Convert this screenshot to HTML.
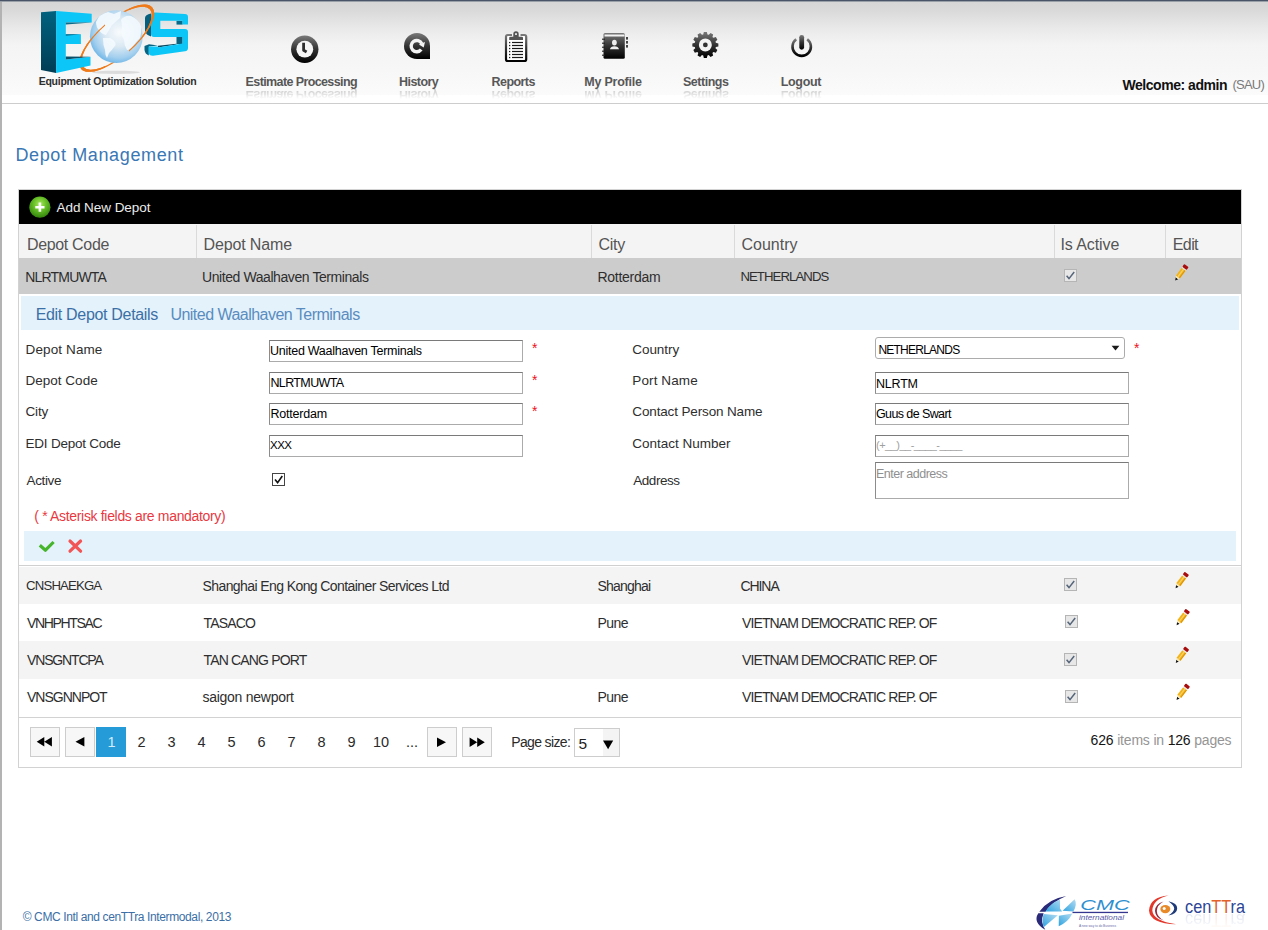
<!DOCTYPE html>
<html><head><meta charset="utf-8">
<style>
*{margin:0;padding:0;box-sizing:border-box}
html,body{width:1268px;height:930px;overflow:hidden;background:#fff;font-family:"Liberation Sans",sans-serif;position:relative}
.b{position:absolute}
.t{position:absolute;white-space:nowrap;line-height:1}
.ov{position:absolute;left:0;top:0}
.inp{position:absolute;height:22px;border:1px solid #ababab;border-top-color:#7a7a7a;border-left-color:#8c8c8c;background:#fff}
.sep{position:absolute;width:1px;background:#dadada;top:225px;height:33px}
.pbtn{position:absolute;top:727px;width:30px;height:30px;background:#f7f7f7;border:1px solid #cdcdcd}
.pn{position:absolute;top:735.4px;font-size:14.5px;color:#2a2a2a;line-height:1}
.ast{position:absolute;color:#ee1020;font-size:14px;line-height:1}
</style></head><body>
<div class="b" style="left:0;top:0;width:1268px;height:95px;background:linear-gradient(#d5d5d5 0px,#d9d9d9 10px,#e9e9e9 28px,#f4f4f4 45px,#f7f7f7 70px,#fafafa 90px,#fbfbfb 95px)"></div>
<div class="b" style="left:0;top:0;width:2px;height:930px;background:#b3b3b3"></div>
<div class="b" style="left:0;top:0;width:1268px;height:1px;background:#4a5468"></div>
<div class="b" style="left:0;top:1px;width:1268px;height:1px;background:#9aa0a8"></div>
<div class="b" style="left:2px;top:103px;width:1266px;height:1px;background:#cdcdcd"></div>

<!-- reflections -->
<div class="b" style="left:0;top:89px;width:900px;height:10px;overflow:hidden;-webkit-mask-image:linear-gradient(rgba(0,0,0,.3),rgba(0,0,0,0));mask-image:linear-gradient(rgba(0,0,0,.3),rgba(0,0,0,0))">
<div class="b" style="left:0;top:-89px;width:900px;height:178px;transform:scaleY(-1);transform-origin:0 88.5px"><div class="t" style="left:245.6px;top:75.5px;font-size:12.5px;letter-spacing:-0.61px;color:#575757;font-weight:bold;">Estimate Processing</div><div class="t" style="left:399.1px;top:75.5px;font-size:12.5px;letter-spacing:-0.57px;color:#575757;font-weight:bold;">History</div><div class="t" style="left:491.6px;top:75.5px;font-size:12.5px;letter-spacing:-0.58px;color:#575757;font-weight:bold;">Reports</div><div class="t" style="left:584.2px;top:75.5px;font-size:12.5px;letter-spacing:-0.21px;color:#575757;font-weight:bold;">My Profile</div><div class="t" style="left:682.9px;top:75.5px;font-size:12.5px;letter-spacing:-0.47px;color:#575757;font-weight:bold;">Settings</div><div class="t" style="left:780.7px;top:75.7px;font-size:12.5px;letter-spacing:-0.3px;color:#575757;font-weight:bold;">Logout</div></div>
</div>

<!-- table -->
<div class="b" style="left:18px;top:189px;width:1224px;height:579px;border:1px solid #d2d2d2"></div>
<div class="b" style="left:19px;top:190px;width:1222px;height:34px;background:#000"></div>
<div class="b" style="left:19px;top:224px;width:1222px;height:34px;background:#f4f4f4"></div>
<div class="sep" style="left:196px"></div>
<div class="sep" style="left:591px"></div>
<div class="sep" style="left:734px"></div>
<div class="sep" style="left:1054px"></div>
<div class="sep" style="left:1165px"></div>
<div class="b" style="left:19px;top:258px;width:1222px;height:36px;background:#cccccc"></div>

<div class="b" style="left:21px;top:296px;width:1218px;height:34px;background:#e3f2fb"></div>
<div class="inp" style="left:269px;top:340px;width:254px"></div>
<div class="inp" style="left:269px;top:372px;width:254px"></div>
<div class="inp" style="left:269px;top:403px;width:254px"></div>
<div class="inp" style="left:269px;top:435px;width:254px"></div>
<div class="b" style="left:875px;top:337px;width:250px;height:22px;border:1px solid #acacac;border-radius:3px;background:#fff"></div>
<div class="inp" style="left:875px;top:372px;width:254px"></div>
<div class="inp" style="left:875px;top:403px;width:254px"></div>
<div class="inp" style="left:875px;top:435px;width:254px"></div>
<div class="inp" style="left:875px;top:462px;width:254px;height:37px"></div>
<div class="ast" style="left:532px;top:341px">*</div>
<div class="ast" style="left:532px;top:373px">*</div>
<div class="ast" style="left:532px;top:404px">*</div>
<div class="ast" style="left:1134px;top:341px">*</div>

<div class="b" style="left:24px;top:531px;width:1212px;height:30px;background:#e3f2fb"></div>
<div class="b" style="left:19px;top:565px;width:1222px;height:1px;background:#d0d0d0"></div>
<div class="b" style="left:19px;top:567px;width:1222px;height:37px;background:#f4f4f4"></div>
<div class="b" style="left:19px;top:641px;width:1222px;height:38px;background:#f4f4f4"></div>
<div class="b" style="left:19px;top:717px;width:1222px;height:1px;background:#d2d2d2"></div>

<div class="pbtn" style="left:30px"></div>
<div class="pbtn" style="left:65px"></div>
<div class="b" style="left:96px;top:727px;width:30px;height:30px;background:#259bd8"></div>
<div class="pn" style="left:107.5px;color:#d2ecfa">1</div>
<div class="pn" style="left:137.5px">2</div>
<div class="pn" style="left:167.5px">3</div>
<div class="pn" style="left:197.5px">4</div>
<div class="pn" style="left:227.5px">5</div>
<div class="pn" style="left:257.5px">6</div>
<div class="pn" style="left:287.5px">7</div>
<div class="pn" style="left:317.5px">8</div>
<div class="pn" style="left:347.5px">9</div>
<div class="pn" style="left:373px">10</div>
<div class="pn" style="left:406px">...</div>
<div class="pbtn" style="left:427px"></div>
<div class="pbtn" style="left:462px"></div>
<div class="b" style="left:574px;top:728px;width:46px;height:29px;border:1px solid #cdcdcd;background:linear-gradient(90deg,#fff 28px,#f4f4f4 28px)"></div>
<div class="t" style="left:578.5px;top:735.8px;font-size:15.5px;color:#222">5</div>

<div class="t" style="left:245.6px;top:75.5px;font-size:12.5px;letter-spacing:-0.61px;color:#575757;font-weight:bold;">Estimate Processing</div><div class="t" style="left:399.1px;top:75.5px;font-size:12.5px;letter-spacing:-0.57px;color:#575757;font-weight:bold;">History</div><div class="t" style="left:491.6px;top:75.5px;font-size:12.5px;letter-spacing:-0.58px;color:#575757;font-weight:bold;">Reports</div><div class="t" style="left:584.2px;top:75.5px;font-size:12.5px;letter-spacing:-0.21px;color:#575757;font-weight:bold;">My Profile</div><div class="t" style="left:682.9px;top:75.5px;font-size:12.5px;letter-spacing:-0.47px;color:#575757;font-weight:bold;">Settings</div><div class="t" style="left:780.7px;top:75.7px;font-size:12.5px;letter-spacing:-0.3px;color:#575757;font-weight:bold;">Logout</div><div class="t" style="left:1122.5px;top:78.0px;font-size:14px;letter-spacing:-0.46px;color:#111;font-weight:bold;">Welcome: admin</div><div class="t" style="left:1232.4px;top:78.0px;font-size:13px;letter-spacing:-0.73px;color:#7a7a7a;">(SAU)</div><div class="t" style="left:15.4px;top:146.2px;font-size:18px;letter-spacing:0.63px;color:#3a77b5;">Depot Management</div><div class="t" style="left:56.5px;top:200.5px;font-size:13.5px;letter-spacing:-0.05px;color:#ececec;">Add New Depot</div><div class="t" style="left:26.9px;top:236.9px;font-size:16px;letter-spacing:-0.32px;color:#555555;">Depot Code</div><div class="t" style="left:203.5px;top:236.9px;font-size:16px;letter-spacing:-0.13px;color:#555555;">Depot Name</div><div class="t" style="left:598.5px;top:236.9px;font-size:16px;letter-spacing:-0.3px;color:#555555;">City</div><div class="t" style="left:741.4px;top:236.9px;font-size:16px;letter-spacing:0.03px;color:#555555;">Country</div><div class="t" style="left:1060.5px;top:236.9px;font-size:16px;letter-spacing:-0.1px;color:#555555;">Is Active</div><div class="t" style="left:1172.8px;top:236.9px;font-size:16px;letter-spacing:-0.6px;color:#555555;">Edit</div><div class="t" style="left:25.3px;top:270.4px;font-size:14px;letter-spacing:-0.82px;color:#2e2e2e;">NLRTMUWTA</div><div class="t" style="left:202.0px;top:270.4px;font-size:14px;letter-spacing:-0.42px;color:#2e2e2e;">United Waalhaven Terminals</div><div class="t" style="left:597.5px;top:270.4px;font-size:14px;letter-spacing:-0.28px;color:#2e2e2e;">Rotterdam</div><div class="t" style="left:740.4px;top:270.4px;font-size:13.2px;letter-spacing:-0.93px;color:#2e2e2e;">NETHERLANDS</div><div class="t" style="left:35.7px;top:306.9px;font-size:16px;letter-spacing:-0.32px;color:#3b6fa6;">Edit Depot Details</div><div class="t" style="left:170.4px;top:307.0px;font-size:16px;letter-spacing:-0.52px;color:#5a8cbf;">United Waalhaven Terminals</div><div class="t" style="left:25.6px;top:342.5px;font-size:13.5px;letter-spacing:0.11px;color:#2e2e2e;">Depot Name</div><div class="t" style="left:25.6px;top:374.4px;font-size:13.5px;letter-spacing:0.0px;color:#2e2e2e;">Depot Code</div><div class="t" style="left:25.6px;top:405.2px;font-size:13.5px;letter-spacing:-0.23px;color:#2e2e2e;">City</div><div class="t" style="left:25.6px;top:437.1px;font-size:13.5px;letter-spacing:-0.24px;color:#2e2e2e;">EDI Depot Code</div><div class="t" style="left:26.6px;top:474.2px;font-size:13.5px;letter-spacing:-0.38px;color:#2e2e2e;">Active</div><div class="t" style="left:632.3px;top:342.5px;font-size:13.5px;letter-spacing:-0.07px;color:#2e2e2e;">Country</div><div class="t" style="left:632.3px;top:374.4px;font-size:13.5px;letter-spacing:0.11px;color:#2e2e2e;">Port Name</div><div class="t" style="left:632.3px;top:405.2px;font-size:13.5px;letter-spacing:-0.14px;color:#2e2e2e;">Contact Person Name</div><div class="t" style="left:632.3px;top:437.1px;font-size:13.5px;letter-spacing:0.0px;color:#2e2e2e;">Contact Number</div><div class="t" style="left:633.3px;top:474.2px;font-size:13.5px;letter-spacing:-0.48px;color:#2e2e2e;">Address</div><div class="t" style="left:270.0px;top:345.0px;font-size:12.5px;letter-spacing:-0.26px;color:#000;">United Waalhaven Terminals</div><div class="t" style="left:270.4px;top:377.0px;font-size:12.5px;letter-spacing:-0.61px;color:#000;">NLRTMUWTA</div><div class="t" style="left:270.4px;top:408.0px;font-size:12.5px;letter-spacing:-0.21px;color:#000;">Rotterdam</div><div class="t" style="left:270.0px;top:440.0px;font-size:11.5px;letter-spacing:-0.5px;color:#000;">XXX</div><div class="t" style="left:878.4px;top:344.4px;font-size:12px;letter-spacing:-0.76px;color:#000;">NETHERLANDS</div><div class="t" style="left:876.0px;top:377.8px;font-size:12.5px;letter-spacing:-0.2px;color:#000;">NLRTM</div><div class="t" style="left:876.0px;top:408.0px;font-size:12.5px;letter-spacing:-0.6px;color:#000;">Guus de Swart</div><div class="t" style="left:876.0px;top:440.0px;font-size:11px;letter-spacing:-0.51px;color:#a0a0a0;">(+__)__-____-____</div><div class="t" style="left:876.0px;top:468.1px;font-size:12.5px;letter-spacing:-0.5px;color:#8f8f8f;">Enter address</div><div class="t" style="left:34.3px;top:508.7px;font-size:14px;letter-spacing:-0.33px;color:#e9383f;">( * Asterisk fields are mandatory)</div><div class="t" style="left:26.1px;top:578.9px;font-size:13.2px;letter-spacing:-0.85px;color:#2e2e2e;">CNSHAEKGA</div><div class="t" style="left:202.5px;top:578.9px;font-size:14px;letter-spacing:-0.59px;color:#2e2e2e;">Shanghai Eng Kong Container Services Ltd</div><div class="t" style="left:597.5px;top:578.9px;font-size:14px;letter-spacing:-0.8px;color:#2e2e2e;">Shanghai</div><div class="t" style="left:740.4px;top:578.9px;font-size:14px;letter-spacing:-1.05px;color:#2e2e2e;">CHINA</div><div class="t" style="left:27.0px;top:615.9px;font-size:14px;letter-spacing:-1.34px;color:#2e2e2e;">VNHPHTSAC</div><div class="t" style="left:203.5px;top:615.9px;font-size:14px;letter-spacing:-0.84px;color:#2e2e2e;">TASACO</div><div class="t" style="left:597.5px;top:615.9px;font-size:14px;letter-spacing:-0.53px;color:#2e2e2e;">Pune</div><div class="t" style="left:742.0px;top:615.9px;font-size:14px;letter-spacing:-0.88px;color:#2e2e2e;">VIETNAM DEMOCRATIC REP. OF</div><div class="t" style="left:27.0px;top:653.2px;font-size:14px;letter-spacing:-1.16px;color:#2e2e2e;">VNSGNTCPA</div><div class="t" style="left:203.5px;top:653.2px;font-size:14px;letter-spacing:-0.84px;color:#2e2e2e;">TAN CANG PORT</div><div class="t" style="left:27.0px;top:690.4px;font-size:14px;letter-spacing:-1.0px;color:#2e2e2e;">VNSGNNPOT</div><div class="t" style="left:202.5px;top:690.4px;font-size:14px;letter-spacing:-0.27px;color:#2e2e2e;">saigon newport</div><div class="t" style="left:511.2px;top:734.8px;font-size:14px;letter-spacing:-0.63px;color:#2a2a2a;">Page size:</div><div class="t" style="left:1090.6px;top:733.3px;font-size:14px;letter-spacing:-0.18px;color:#959595;"><span style="color:#151515">626</span> items in <span style="color:#151515">126</span> pages</div><div class="t" style="left:22.7px;top:910.5px;font-size:12px;letter-spacing:-0.38px;color:#3b6fa6;">&copy; CMC Intl and cenTTra Intermodal, 2013</div><div class="t" style="left:38.7px;top:75.8px;font-size:10.5px;letter-spacing:-0.26px;color:#2e2e2e;font-weight:bold;">Equipment Optimization Solution</div><div class="t" style="left:742.0px;top:653.2px;font-size:14px;letter-spacing:-0.88px;color:#2e2e2e;">VIETNAM DEMOCRATIC REP. OF</div><div class="t" style="left:597.5px;top:690.4px;font-size:14px;letter-spacing:-0.53px;color:#2e2e2e;">Pune</div><div class="t" style="left:742.0px;top:690.4px;font-size:14px;letter-spacing:-0.88px;color:#2e2e2e;">VIETNAM DEMOCRATIC REP. OF</div>
<svg class="ov" width="1268" height="930" viewBox="0 0 1268 930">
<defs>
<linearGradient id="ig" x1="0" y1="0" x2="0" y2="1"><stop offset="0" stop-color="#7a7a7a"/><stop offset="0.5" stop-color="#333"/><stop offset="1" stop-color="#000"/></linearGradient>
<radialGradient id="gplus" cx="0.5" cy="0.35" r="0.6"><stop offset="0" stop-color="#a8e85a"/><stop offset="0.55" stop-color="#62bb24"/><stop offset="1" stop-color="#3a8c10"/></radialGradient>
<linearGradient id="edark" x1="0" y1="0" x2="0" y2="1"><stop offset="0" stop-color="#00627f"/><stop offset="1" stop-color="#003d55"/></linearGradient>
<radialGradient id="globe" cx="0.55" cy="0.42" r="0.6"><stop offset="0" stop-color="#f8fbfd"/><stop offset="0.45" stop-color="#dbe9f3"/><stop offset="0.8" stop-color="#a3cfee"/><stop offset="1" stop-color="#6fb6e8"/></radialGradient>
<clipPath id="orbclip"><rect x="0" y="0" width="105" height="100"/><rect x="129" y="0" width="100" height="100"/></clipPath>
<linearGradient id="fadew" x1="0" y1="0" x2="0" y2="1"><stop offset="0" stop-color="#fff" stop-opacity="0"/><stop offset="1" stop-color="#fff" stop-opacity="1"/></linearGradient>
<linearGradient id="cmcb" x1="0" y1="1" x2="1" y2="0"><stop offset="0" stop-color="#2ea3e0"/><stop offset="1" stop-color="#b4dcf2"/></linearGradient>
</defs>

<!-- EOS logo -->
<g id="logo">
<ellipse cx="116" cy="72.3" rx="24" ry="1.6" fill="#d0d0d0" opacity="0.7"/>
<path d="M145,18 Q145,14.5 151,13.5 L151,36.5 Q146,35 145,31 Z" fill="#075f7e"/>
<rect x="176.5" y="20.8" width="6.1" height="3.8" fill="#066a8a"/>
<rect x="176.5" y="37" width="6.1" height="7" fill="#06607e"/>
<polygon points="158,45.8 176.5,43.8 176.5,44.6 158,47.6" fill="#064a62"/>
<path d="M144.5,46 L149,44.3 L158,45.6 L148.8,46.4 L148.8,55.5 Q145,54 144.5,50 Z" fill="#066585"/>
<path d="M151,16 Q151,12.4 155,12.4 L185,14 Q188,14.2 188,17 L188,24.6 L182.6,24.6 L182.6,20.8 L160.3,20.8 L160.3,28.9 L185,28.9 Q188,29 188,32 L188,48 Q188,50.9 185,51.2 L153,55.7 Q148.8,55.8 148.8,52.5 L148.8,46.4 L158,46.4 L158,47.6 L182.6,43.5 L182.6,37 L154,37 Q151,37 151,34 Z" fill="#0bc6f7"/>
<path fill-rule="evenodd" fill="#ee7a1a" d="M81.12,68.91 A47,18.2 -40.8 1 1 152.28,7.49 A47,18.2 -40.8 1 1 81.12,68.91 Z M83.39,66.95 A44,17.1 -40.8 1 1 150.01,9.45 A44,17.1 -40.8 1 1 83.39,66.95 Z"/>
<circle cx="116.3" cy="36.6" r="26.4" fill="url(#globe)"/>
<g fill="#f5fbff" opacity="0.9">
<path d="M96,22 Q99,14 108,12 L114,14 L121,11 L120,18 Q115,22 112,25 Q109,30 106,35 Q101,34 99,30 Q96,27 96,22 Z"/>
<path d="M103,38 L110,38 Q116,41 115.5,45 Q112,50 109,53 L107,58 Q105,55 105,50 Q103,45 103,38 Z"/>
<path d="M121,20 Q125,15 131,16 Q138,19 141,26 Q142,32 140,38 Q136,42 133,46 Q130,50 127,50 Q124,45 124,40 Q121,36 121,31 Q123,27 121,20 Z"/>
</g>
<path fill-rule="evenodd" fill="#ee7a1a" clip-path="url(#orbclip)" d="M81.12,68.91 A47,18.2 -40.8 1 1 152.28,7.49 A47,18.2 -40.8 1 1 81.12,68.91 Z M83.39,66.95 A44,17.1 -40.8 1 1 150.01,9.45 A44,17.1 -40.8 1 1 83.39,66.95 Z"/>
<polygon points="41,12.2 56.1,11 56.1,73 41,69.9" fill="url(#edark)"/>
<polygon points="56.1,11 91.7,13.7 91.7,22.6 65.8,22.6 65.8,34.2 80.9,34.2 80.9,43.9 65.8,43.9 65.8,59.4 90.5,56.7 90.5,65.6 56.1,73" fill="#0bc6f7"/>
<polygon points="65.8,22.6 91.7,22.6 65.8,24.4" fill="#0a6a8a"/>
<polygon points="65.8,34.2 80.9,34.2 65.8,35.8" fill="#0a6a8a"/>
<polygon points="65.8,56.4 90.5,56.7 65.8,59.4" fill="#0a4f6a"/>
</g>

<!-- CMC logo -->
<g>
<path d="M1039.3,911.8 Q1048,899 1066.2,896 Q1051,902.5 1045.5,911.8 Z" fill="#2a2a78"/>
<path d="M1038.3,913.3 Q1032.5,922.5 1045.3,929.8 Q1040,922 1043.6,913.3 Z" fill="#2a2a78"/>
<path d="M1045.5,911.6 Q1050,903.5 1060,899.6 L1060,908.6 L1062.2,911.6 Z" fill="url(#cmcb)"/>
<path d="M1062.6,910.8 L1074.6,899.3 Q1077.5,904 1073.4,911.6 Z" fill="url(#cmcb)"/>
<path d="M1043.6,914 L1057.8,915.3 L1043.6,927.2 Q1041.8,920 1043.6,914 Z" fill="url(#cmcb)"/>
<path d="M1058.9,915.7 L1072.4,913.6 Q1068,922.5 1058.7,926.2 Z" fill="url(#cmcb)"/>
<text x="1080.3" y="909.6" font-family="Liberation Sans" font-style="italic" font-size="14" fill="#2e8fd0" textLength="49.4" lengthAdjust="spacingAndGlyphs">CMC</text>
<rect x="1072.5" y="911.8" width="55.5" height="1.3" fill="#34358e"/>
<text x="1079" y="920.2" font-family="Liberation Sans" font-style="italic" font-size="6.6" fill="#5b5ca6" textLength="45" lengthAdjust="spacingAndGlyphs">international</text>
<text x="1079" y="927.3" font-family="Liberation Sans" font-size="4" fill="#6a6aa8" textLength="37" lengthAdjust="spacingAndGlyphs">A new way to do Business</text>
</g>
<!-- cenTTra logo -->
<g>
<path d="M1168.5,895.6 Q1150,897 1149,910.5 Q1150,923.5 1176.5,924.3 Q1153,921 1152.3,910.5 Q1153,899 1168.5,895.6 Z" fill="#e2372a"/>
<path d="M1163.5,901.5 Q1155,904 1155,911 Q1155.5,918.5 1164,920.5 Q1157,917 1156.8,911 Q1157,905 1163.5,901.5 Z" fill="#93283c"/>
<path d="M1168.4,901.2 Q1177.5,903 1177.2,908.5 Q1177,914 1168.4,915.6 Q1174,912 1174.2,908.5 Q1174,905 1168.4,901.2 Z" fill="#1f3a78"/>
<ellipse cx="1165.3" cy="909.1" rx="5" ry="4.2" fill="#e8892a"/>
<circle cx="1164.2" cy="908.4" r="1.5" fill="#fff"/>
<text x="1185" y="912.7" font-family="Liberation Sans" font-size="18.5" fill="#2c4597" textLength="60" lengthAdjust="spacingAndGlyphs">cen<tspan fill="#e2602a">TT</tspan>ra</text>
<g opacity="0.10" transform="translate(0,1826.4) scale(1,-1)"><text x="1185" y="912.7" font-family="Liberation Sans" font-size="18.5" fill="#2c4597" textLength="60" lengthAdjust="spacingAndGlyphs">cen<tspan fill="#e2602a">TT</tspan>ra</text></g>
<rect x="1180" y="918" width="70" height="12" fill="url(#fadew)"/>
</g>
<!-- clock -->
<circle cx="304.75" cy="49.25" r="13.7" fill="url(#ig)"/>
<circle cx="304.8" cy="49.2" r="8.4" fill="#f6f6f6"/>
<path d="M303.6,42.8 V50.2 L306.6,52" fill="none" stroke="#2e2e2e" stroke-width="2.8" stroke-linejoin="round"/>
<!-- history -->
<path d="M404,46 A13,13 0 0 1 430,46 L430,59 L417,59 A13,13 0 0 1 404,46 Z" fill="url(#ig)"/>
<path d="M421.22,49.47 A5.6,5.6 0 1 1 421.83,43.73" fill="none" stroke="#f4f4f4" stroke-width="3.4"/>
<path d="M418.9,44.6 L425,41.9 L423.7,47.5 Z" fill="#f4f4f4"/>
<!-- reports -->
<rect x="506" y="35" width="20.2" height="26" rx="1.8" fill="#fff" stroke="url(#ig)" stroke-width="2.2"/>
<rect x="512" y="33" width="8.5" height="4" fill="#f2f2f2"/>
<path d="M509.2,40 L509.2,37.8 Q509.2,36.8 510.4,36.8 L513.3,36.8 L513.3,34 A2.7,2.7 0 0 1 518.7,34 L518.7,36.8 L521.8,36.8 Q523,36.8 523,37.8 L523,40 Z" fill="#555"/>
<rect x="515" y="33.2" width="2" height="1.8" fill="#ddd"/>
<g fill="#1a1a1a">
<rect x="509" y="41.9" width="1.3" height="1.3"/><rect x="512" y="41.9" width="11" height="1.2"/>
<rect x="509" y="44.9" width="1.3" height="1.3"/><rect x="512" y="44.9" width="11" height="1.2"/>
<rect x="509" y="47.9" width="1.3" height="1.3"/><rect x="512" y="47.9" width="11" height="1.2"/>
<rect x="509" y="50.9" width="1.3" height="1.3"/><rect x="512" y="50.9" width="11" height="1.2"/>
<rect x="509" y="53.9" width="1.3" height="1.3"/><rect x="512" y="53.9" width="11" height="1.2"/>
<rect x="509" y="56.9" width="1.3" height="1.3"/><rect x="512" y="56.9" width="11" height="1.2"/>
</g>
<!-- profile -->
<rect x="603.5" y="33" width="21.3" height="25.8" rx="1.5" fill="url(#ig)"/>
<rect x="604.5" y="34.5" width="20" height="2" fill="#f2f2f2"/>
<g fill="none" stroke="#222" stroke-width="1.1">
<path d="M602,39.2 h3"/><path d="M602,43.2 h3"/><path d="M602,47.2 h3"/><path d="M602,51.2 h3"/><path d="M602,55.2 h3"/>
</g>
<g fill="#444"><rect x="626" y="37" width="2" height="2.6"/><rect x="626" y="41" width="2" height="2.6"/><rect x="626" y="45" width="2" height="2.6"/></g>
<ellipse cx="614.4" cy="42.6" rx="2.4" ry="2.9" fill="#eee"/>
<path d="M610,49.2 Q610.5,46.2 614.4,46.2 Q618.3,46.2 619,49.2 Z" fill="#eee"/>
<!-- gear -->
<polygon points="703.22,34.41 703.85,31.89 706.85,31.89 707.48,34.41 708.75,34.76 710.55,32.88 713.16,34.38 712.43,36.88 713.37,37.82 715.87,37.09 717.37,39.70 715.49,41.50 715.84,42.77 718.36,43.40 718.36,46.40 715.84,47.03 715.49,48.30 717.37,50.10 715.87,52.71 713.37,51.98 712.43,52.92 713.16,55.42 710.55,56.92 708.75,55.04 707.48,55.39 706.85,57.91 703.85,57.91 703.22,55.39 701.95,55.04 700.15,56.92 697.54,55.42 698.27,52.92 697.33,51.98 694.83,52.71 693.33,50.10 695.21,48.30 694.86,47.03 692.34,46.40 692.34,43.40 694.86,42.77 695.21,41.50 693.33,39.70 694.83,37.09 697.33,37.82 698.27,36.88 697.54,34.38 700.15,32.88 701.95,34.76" fill="url(#ig)"/>
<circle cx="705.35" cy="44.9" r="6.5" fill="#f4f4f4"/>
<circle cx="705.35" cy="44.9" r="2.4" fill="#333"/>
<!-- power -->
<path d="M796.2,39.3 A9.2,9.2 0 1 0 807.2,39.3" fill="none" stroke="url(#ig)" stroke-width="2.6"/>
<rect x="799.3" y="34.9" width="4.8" height="14.8" rx="2.4" fill="url(#ig)"/>
<!-- plus -->
<circle cx="39.9" cy="207.2" r="10.6" fill="url(#gplus)"/>
<path d="M35.3,207.2 H44.5 M39.9,202.6 V211.8" stroke="#fff" stroke-width="2.6"/>
<!-- disabled checkboxes -->
<rect x="1064.5" y="269.5" width="12" height="12" fill="#e7e7e7" stroke="#b5b5b5"/><path d="M1066.6,275.8 L1069,278.6 L1074.2,272" fill="none" stroke="#56657a" stroke-width="1.5"/><rect x="1064.5" y="578.5" width="12" height="12" fill="#e7e7e7" stroke="#b5b5b5"/><path d="M1066.6,584.8 L1069,587.6 L1074.2,581" fill="none" stroke="#56657a" stroke-width="1.5"/><rect x="1065.5" y="615.5" width="12" height="12" fill="#e7e7e7" stroke="#b5b5b5"/><path d="M1067.6,621.8 L1070,624.6 L1075.2,618" fill="none" stroke="#56657a" stroke-width="1.5"/><rect x="1064.5" y="653.5" width="12" height="12" fill="#e7e7e7" stroke="#b5b5b5"/><path d="M1066.6,659.8 L1069,662.6 L1074.2,656" fill="none" stroke="#56657a" stroke-width="1.5"/><rect x="1065.5" y="690.5" width="12" height="12" fill="#e7e7e7" stroke="#b5b5b5"/><path d="M1067.6,696.8 L1070,699.6 L1075.2,693" fill="none" stroke="#56657a" stroke-width="1.5"/>
<!-- pencils -->
<g transform="translate(1175.2,280.6) rotate(-53)">
<path d="M0,0 L3,-1.6 L3,1.6 Z" fill="#111"/>
<path d="M3,-1.6 L4.6,-2.5 L4.6,2.5 L3,1.6 Z" fill="#f6e9b8"/>
<rect x="4.6" y="-2.5" width="9.6" height="5" fill="#f2b318"/>
<rect x="4.6" y="-0.7" width="9.6" height="1.1" fill="#f9d36a"/>
<rect x="4.6" y="1.4" width="9.6" height="0.8" fill="#d98f0a"/>
<rect x="14.2" y="-2.5" width="1.2" height="5" fill="#e9e6dc"/>
<rect x="15.4" y="-2.7" width="3.4" height="5.4" rx="0.8" fill="#a80c0c"/>
</g><g transform="translate(1175.6,588.3) rotate(-53)">
<path d="M0,0 L3,-1.6 L3,1.6 Z" fill="#111"/>
<path d="M3,-1.6 L4.6,-2.5 L4.6,2.5 L3,1.6 Z" fill="#f6e9b8"/>
<rect x="4.6" y="-2.5" width="9.6" height="5" fill="#f2b318"/>
<rect x="4.6" y="-0.7" width="9.6" height="1.1" fill="#f9d36a"/>
<rect x="4.6" y="1.4" width="9.6" height="0.8" fill="#d98f0a"/>
<rect x="14.2" y="-2.5" width="1.2" height="5" fill="#e9e6dc"/>
<rect x="15.4" y="-2.7" width="3.4" height="5.4" rx="0.8" fill="#a80c0c"/>
</g><g transform="translate(1176.6,625.3) rotate(-53)">
<path d="M0,0 L3,-1.6 L3,1.6 Z" fill="#111"/>
<path d="M3,-1.6 L4.6,-2.5 L4.6,2.5 L3,1.6 Z" fill="#f6e9b8"/>
<rect x="4.6" y="-2.5" width="9.6" height="5" fill="#f2b318"/>
<rect x="4.6" y="-0.7" width="9.6" height="1.1" fill="#f9d36a"/>
<rect x="4.6" y="1.4" width="9.6" height="0.8" fill="#d98f0a"/>
<rect x="14.2" y="-2.5" width="1.2" height="5" fill="#e9e6dc"/>
<rect x="15.4" y="-2.7" width="3.4" height="5.4" rx="0.8" fill="#a80c0c"/>
</g><g transform="translate(1175.8,663) rotate(-53)">
<path d="M0,0 L3,-1.6 L3,1.6 Z" fill="#111"/>
<path d="M3,-1.6 L4.6,-2.5 L4.6,2.5 L3,1.6 Z" fill="#f6e9b8"/>
<rect x="4.6" y="-2.5" width="9.6" height="5" fill="#f2b318"/>
<rect x="4.6" y="-0.7" width="9.6" height="1.1" fill="#f9d36a"/>
<rect x="4.6" y="1.4" width="9.6" height="0.8" fill="#d98f0a"/>
<rect x="14.2" y="-2.5" width="1.2" height="5" fill="#e9e6dc"/>
<rect x="15.4" y="-2.7" width="3.4" height="5.4" rx="0.8" fill="#a80c0c"/>
</g><g transform="translate(1176.6,700) rotate(-53)">
<path d="M0,0 L3,-1.6 L3,1.6 Z" fill="#111"/>
<path d="M3,-1.6 L4.6,-2.5 L4.6,2.5 L3,1.6 Z" fill="#f6e9b8"/>
<rect x="4.6" y="-2.5" width="9.6" height="5" fill="#f2b318"/>
<rect x="4.6" y="-0.7" width="9.6" height="1.1" fill="#f9d36a"/>
<rect x="4.6" y="1.4" width="9.6" height="0.8" fill="#d98f0a"/>
<rect x="14.2" y="-2.5" width="1.2" height="5" fill="#e9e6dc"/>
<rect x="15.4" y="-2.7" width="3.4" height="5.4" rx="0.8" fill="#a80c0c"/>
</g>
<!-- form checkbox -->
<rect x="272.5" y="473.5" width="12" height="12" fill="#fff" stroke="#444"/>
<path d="M275,479.5 L277.6,482.6 L282.3,476" fill="none" stroke="#111" stroke-width="1.6"/>
<!-- asterisks -->
<!-- select arrow -->
<path d="M1111.6,345.8 H1119.4 L1115.5,350.4 Z" fill="#1a1a1a"/>
<!-- action icons -->
<path d="M39.8,545.2 L45.5,550.2 L53.6,542" fill="none" stroke="#46b52c" stroke-width="3.2" stroke-linejoin="round"/>
<path d="M70,541 L80.6,551.2 M80.6,541 L70,551.2" stroke="#f25555" stroke-width="3.2" stroke-linecap="round"/>
<!-- pager arrows -->
<path d="M36.7,741.7 L44.3,737 V746.4 Z M44.3,741.7 L51.9,737 V746.4 Z" fill="#000"/>
<path d="M75.5,741.7 L84.4,737 V746.4 Z" fill="#000"/>
<path d="M446,742.2 L437,737.5 V747 Z" fill="#000"/>
<path d="M477.2,742.2 L469.6,737.5 V747 Z M484.8,742.2 L477.2,737.5 V747 Z" fill="#000"/>
<path d="M603,740.5 H613.2 L608.1,749.3 Z" fill="#000"/>
</svg>
</body></html>
